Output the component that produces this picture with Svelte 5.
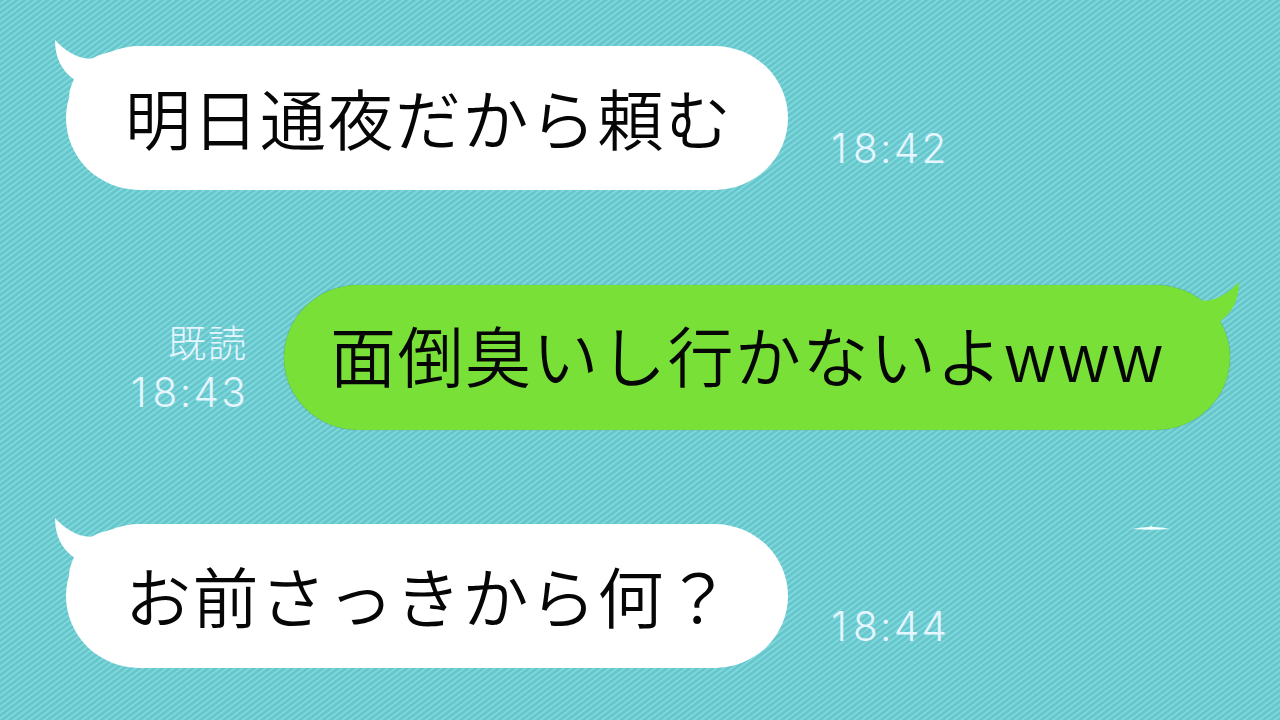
<script>
  const messages = [
    { from: 'them', text: '明日通夜だから頼む', time: '18:42' },
    { from: 'me', text: '面倒臭いし行かないよwww', time: '18:43', read: true },
    { from: 'them', text: 'お前さっきから何？', time: '18:44' }
  ];
</script>

<div class="chat">
  {#each messages as msg}
    <div class="row {msg.from}">
      <div class="bubble">
        <svg class="tail" width="60" height="60" viewBox="0 0 60 60">
          <path d="M5 4 C15 15 30 24 42 22.5 Q50 18 60 16 L60 60 L19 60 Q20 51 24 43.5 C12 35 5 22 5 4 Z" />
        </svg>
        <span class="text">{msg.text}</span>
      </div>
      <div class="meta">
        {#if msg.read}
          <span class="read">既読</span>
        {/if}
        <span class="time">{msg.time}</span>
      </div>
    </div>
  {/each}
  <!-- top edge of the next item scrolling in -->
  <svg class="sliver" width="38" height="6" viewBox="0 0 38 6">
    <path d="M0 4 Q10 2 18 2 L19 0.8 L21 2 Q30 2 38 4 Q19 5.6 0 4 Z" />
  </svg>
</div>

<style>
  :global(body) {
    margin: 0;
  }

  .chat {
    position: relative;
    box-sizing: border-box;
    width: 1280px;
    height: 720px;
    padding: 45.5px 50px 0 66px;
    display: flex;
    flex-direction: column;
    gap: 94.5px;
    overflow: hidden;
    font-family: "Noto Sans CJK JP", sans-serif;
    background: repeating-linear-gradient(-37deg, #66c6cb 0 1.8px, #80dadd 3px 3.6px, #66c6cb 4.6px);
  }

  .row {
    display: flex;
    align-items: flex-end;
    height: 144.5px;
    flex: none;
  }

  .row.me {
    flex-direction: row-reverse;
  }

  .bubble {
    position: relative;
    box-sizing: border-box;
    width: 722px;
    height: 144.5px;
    padding: 2px 0 0 59px;
    display: flex;
    align-items: center;
    border-radius: 74px / 72.5px;
    background: #fff;
  }

  .me .bubble {
    width: 946px;
    height: 145.5px;
    margin-bottom: -1px;
    padding: 0 0 3px 46px;
    background: #79e038;
    box-shadow: 0 0 1px #3d8a6a;
  }

  .tail {
    position: absolute;
    left: -16px;
    top: -9.5px;
    fill: #fff;
  }

  .me .tail {
    left: auto;
    right: -14px;
    top: -7px;
    fill: #79e038;
    transform: scaleX(-1);
  }

  .text {
    position: relative;
    top: -3px;
    font-size: 66px;
    font-weight: 350;
    line-height: 1;
    letter-spacing: 1.5px;
    white-space: nowrap;
    color: #060606;
  }

  .meta {
    display: flex;
    flex-direction: column;
    align-items: flex-end;
    margin: 0 0 16px 43px;
    color: #e6f5ff;
  }

  .me .meta {
    margin: 0 36px 11px 0;
  }

  .read {
    font-size: 38px;
    font-weight: 300;
    line-height: 54px;
    letter-spacing: 2px;
  }

  .time {
    font-family: Inter, sans-serif;
    font-size: 40.5px;
    font-weight: 300;
    line-height: 50px;
    letter-spacing: 2.3px;
  }

  /* the narrow 1 needs more room */
  .time::first-letter {
    letter-spacing: 6px;
  }

  .sliver {
    position: absolute;
    left: 1132px;
    top: 525px;
    fill: #f2ffff;
  }
</style>
